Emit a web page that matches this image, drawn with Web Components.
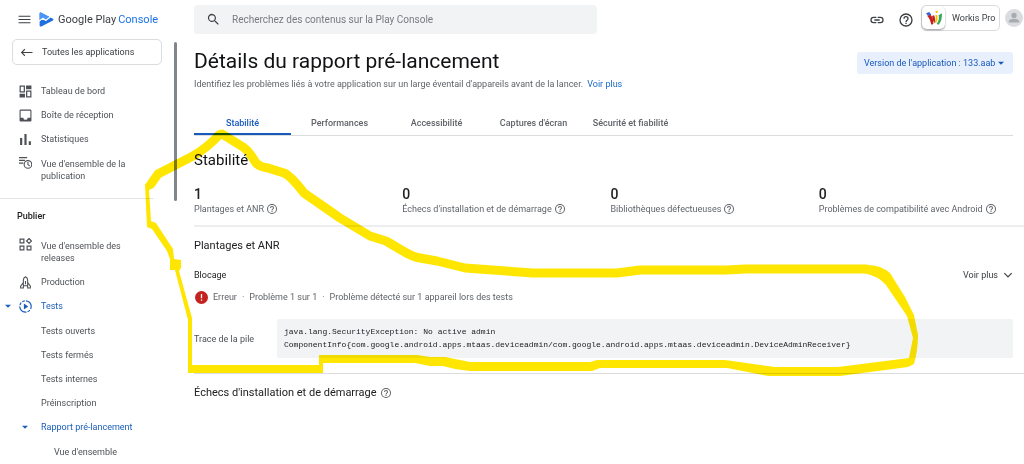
<!DOCTYPE html>
<html lang="fr">
<head>
<meta charset="utf-8">
<meta name="viewport" content="width=device-width, initial-scale=1">
<title>Détails du rapport pré-lancement</title>
<style>
body{margin:0;background:#fff;color:#3c4043;font:9px/12px Roboto,"Liberation Sans",sans-serif}
</style>
</head>
<body>
<play-console></play-console>

<script>
const define = (name, html, setup) => {
  const template = document.createElement('template');
  template.innerHTML = html;
  customElements.define(name, class extends HTMLElement {
    constructor() {
      super();
      this.attachShadow({mode: 'open'}).append(template.content.cloneNode(true));
    }
    connectedCallback() { if (setup) setup(this, this.shadowRoot); }
  });
};

const icons = {
  menu: '<path d="M1 19h22v-2H1v2zm0-6h22v-2H1v2zm0-8v2h22V5H1z"/>',
  back: '<path d="M23 11H5.400l4.300-4.300L8.300 5.300 1.600 12l6.700 6.700 1.400-1.400L5.400 13H23z"/>',
  dashboard: '<path d="M1 1h10v13H1zM3.300 3.300v8.400h5.400V3.300zM13 1h10v7H13zM13 10h10v13H13zM15.300 12.300v8.400h5.400v-8.400zM1 16h10v7H1z" fill-rule="evenodd"/>',
  inbox: '<path fill-rule="evenodd" d="M3 1h18a2 2 0 0 1 2 2v18a2 2 0 0 1-2 2H3a2 2 0 0 1-2-2V3a2 2 0 0 1 2-2zm0 2v13h5a4 4 0 0 0 8 0h5V3z"/>',
  bars: '<path d="M2 9h4v13H2zM10 2h4v20h-4zM18 15h4v7h-4z"/>',
  schedule: '<path d="M0 2h15v2.200H0zM0 7h11v2.200H0zM0 12h8v2.200H0z"/><circle cx="16.500" cy="15.500" r="7" fill="none" stroke="currentColor" stroke-width="2"/><path d="M15.500 11h2v4.500l3 2-1 1.600-4-2.600z"/>',
  widgets: '<g fill="none" stroke="currentColor" stroke-width="2.200"><path d="M2 2h7v7H2zM2 15h7v7H2zM15 15h7v7h-7zM18.500 1l4.500 4.500-4.500 4.500L14 5.500z"/></g>',
  production: '<g fill="none" stroke="currentColor" stroke-width="2"><path d="M8 21V8c0-3 2-5.500 4-6.500 2 1 4 3.500 4 6.500v13M8 12l-5 7v3h5v-4h8v4h5v-3l-5-7M12 9v6"/></g>',
  tests: '<circle cx="12" cy="12" r="10.500" fill="none" stroke="currentColor" stroke-width="2.200" stroke-dasharray="5 2.200 5 2.200 12 0 6 2.200"/><path d="M9 6.500v11l8-5.500z"/>',
  caret: '<path d="M3 8h18l-9 9z"/>',
  search: '<path d="M15.500 14h-.8l-.3-.3A6.500 6.500 0 1 0 13.700 14.400l.3.3v.8l5 5 1.500-1.500zm-6 0a4.500 4.500 0 1 1 0-9 4.500 4.500 0 0 1 0 9z"/>',
  link: '<path d="M3.900 12A3.100 3.100 0 0 1 7 8.900h4V7H7a5 5 0 0 0 0 10h4v-1.900H7A3.100 3.100 0 0 1 3.900 12zM8 13h8v-2H8zm9-6h-4v1.900h4a3.100 3.100 0 0 1 0 6.200h-4V17h4a5 5 0 0 0 0-10z"/>',
  help: '<path d="M11 18h2v-2h-2zm1-16a10 10 0 1 0 0 20 10 10 0 0 0 0-20zm0 18a8 8 0 1 1 0-16 8 8 0 0 1 0 16zm0-14a4 4 0 0 0-4 4h2a2 2 0 1 1 4 0c0 2-3 1.750-3 5h2c0-2.250 3-2.500 3-5a4 4 0 0 0-4-4z"/>',
  error: '<circle cx="12" cy="12" r="12"/><path fill="#fff" d="M10.800 5.500h2.400v8h-2.400zM10.800 15.500h2.400V18h-2.400z"/>',
  chevron: '<path d="M6.400 8.100 12 13.700l5.600-5.600L19 9.500l-7 7-7-7z"/>',
  logo: '<path fill="#1f6fe0" d="M1 2.500C1 .8 2.200.2 3.600 1L22.300 10.600c1.200.7 1.200 2.100 0 2.800L3.600 23C2.200 23.800 1 23.200 1 21.500z"/><path fill="#4a97f7" d="M1 2.500C1 .8 2.200.2 3.600 1L17 8l-6 5-4-3-6 4z"/><path fill="none" stroke="#fff" stroke-width="1.900" stroke-linejoin="round" d="M0 14.500 6.500 10l4.200 3.500L18 8"/>',
  workis: '<path fill="#3367d6" d="M0 5l5-2 3 4-5 2z"/><path fill="#c5221f" d="M2 9l5-2c3 4 4 8 4 14l-3 1C7 17 5 12 2 9zM9 9l3-1c2 3 2 7 1 12l-2-3z"/><path fill="#fbbc04" d="M14 7l3 1c1 5 0 9-2 12l-2-2c2-4 2-7 1-11zM14 2l4-1-1 3-2 1z"/><path fill="#34a853" d="M19 8l5-3c0 7-1 13-5 17l-3-1c3-4 4-8 3-13z"/>',
  person: '<circle cx="12" cy="12" r="12" fill="#dadce0"/><g fill="#a8abaf"><circle cx="12" cy="8.500" r="3.500"/><path d="M5 17c0-3 4-4 7-4s7 1 7 4v1H5z"/></g>'
};

define('ui-icon', `<style>
:host{display:block;flex:none;width:var(--size,12px);height:var(--size,12px)}
svg{display:block;width:100%;height:100%;fill:currentColor}
</style><svg viewBox="0 0 24 24" aria-hidden="true"></svg>`,
(host, root) => { root.querySelector('svg').innerHTML = icons[host.getAttribute('name')]; });

define('nav-item', `<style>
:host{display:block}
a{display:flex;align-items:center;box-sizing:border-box;min-height:24px;padding:5px 36px 5px 4px;color:#4d5156;text-decoration:none}
:host([tall]) a{min-height:37px}
:host([tall]) .icon{align-self:flex-start}
:host([active]) a{color:#1a5dba}
.lead{flex:none;width:8px;--size:8px;margin-right:6px}
.icon{flex:none;width:14px;margin-right:9px;display:flex;justify-content:center;--size:13px}
:host([level="3"]) a{padding-left:17px}
</style><a href="#"><span class="lead"></span><span class="icon"></span><slot></slot></a>`,
(host, root) => {
  const icon = host.getAttribute('icon');
  if (icon) root.querySelector('.icon').innerHTML = '<ui-icon name="' + icon + '"' + (icon === 'caret' ? ' style="--size:8px"' : '') + '></ui-icon>';
  if (host.hasAttribute('expanded')) root.querySelector('.lead').innerHTML = '<ui-icon name="caret"></ui-icon>';
});

define('side-nav', `<style>
:host{display:flex;justify-content:space-between}
nav{flex:1;min-width:0}
.all{display:flex;align-items:center;width:150px;height:26px;margin:0 0 14px 12px;padding:0 7px;gap:9px;border:1px solid #dadce0;border-radius:5px;background:#fff;color:#3c4043;font:inherit;box-sizing:border-box}
.all ui-icon{color:#3c4043;--size:13px}
hr{border:0;border-top:1px solid #e3e5e8;margin:10px 20px 11px 0}
h2{margin:0 0 11px 17px;font-size:9px;line-height:12px;font-weight:500;color:#202124}
.sub{padding-top:1px}
.thumb{width:3px;height:159px;margin:3px 3px 0 0;border-radius:2px;background:#80868b}
</style>
<nav aria-label="Menu principal">
<button class="all"><ui-icon name="back"></ui-icon>Toutes les applications</button>
<nav-item icon="dashboard">Tableau de bord</nav-item>
<nav-item icon="inbox">Boîte de réception</nav-item>
<nav-item icon="bars">Statistiques</nav-item>
<nav-item icon="schedule" tall>Vue d'ensemble de la publication</nav-item>
<hr>
<h2>Publier</h2>
<nav-item icon="widgets" tall>Vue d'ensemble des releases</nav-item>
<nav-item icon="production">Production</nav-item>
<nav-item icon="tests" active expanded>Tests</nav-item>
<div class="sub">
<nav-item>Tests ouverts</nav-item>
<nav-item>Tests fermés</nav-item>
<nav-item>Tests internes</nav-item>
<nav-item>Préinscription</nav-item>
<nav-item icon="caret" active>Rapport pré-lancement</nav-item>
<div class="sub"><nav-item level="3">Vue d'ensemble</nav-item></div>
</div>
</nav>
<div class="thumb"></div>`);

define('top-bar', `<style>
:host{display:grid;grid-template-columns:194px minmax(0,1fr) auto;align-items:center;height:39px}
.brand{display:flex;align-items:center;padding-left:18px}
button{font:inherit;color:#3c4043;background:none;border:0;padding:0}
.brand ui-icon{--size:13px}
.brand a{display:flex;align-items:center;gap:4px;margin-left:8px;color:#3c4043;text-decoration:none;font-size:11px}
.brand a ui-icon{--size:15px}
.brand span{display:flex;gap:2px}
.brand em{font-style:normal;color:#1a73e8}
.search{display:flex;align-items:center;gap:11px;box-sizing:border-box;width:100%;max-width:403px;height:29px;padding:0 12px;border-radius:4px;background:#f1f3f4}
.search ui-icon{--size:15px}
input{flex:1;min-width:0;border:0;padding:0;background:none;font:10px/14px Roboto,"Liberation Sans",sans-serif;color:#3c4043;outline:0}
input::placeholder{color:#777b80;opacity:1}
.tools{display:flex;align-items:center}
.tools ui-icon{--size:16px}
.tools .link{margin-right:13px}
.tools .help{margin-right:7px}
.app{display:flex;align-items:center;width:79px;height:26px;box-sizing:border-box;gap:7px;border:1px solid #dadce0;border-radius:5px;margin:0 5px 4px 0}
.tile{display:flex;align-items:center;justify-content:center;width:23px;height:23px;border-radius:5px;box-shadow:0 1px 2px #0006}
.app,.user{white-space:nowrap}
.user{margin:0 1px 4px 0}
.user ui-icon{--size:18px}
</style>
<div class="brand"><button aria-label="Menu"><ui-icon name="menu"></ui-icon></button><a href="#"><ui-icon name="logo"></ui-icon><span>Google Play <em>Console</em></span></a></div>
<label class="search"><ui-icon name="search"></ui-icon><input type="search" aria-label="Rechercher" placeholder="Recherchez des contenus sur la Play Console"></label>
<div class="tools">
<button class="link" aria-label="Lien"><ui-icon name="link"></ui-icon></button>
<button class="help" aria-label="Aide"><ui-icon name="help"></ui-icon></button>
<button class="app"><span class="tile"><ui-icon name="workis"></ui-icon></span>Workis Pro</button>
<button class="user" aria-label="Compte"><ui-icon name="person"></ui-icon></button>
</div>`);

define('report-header', `<style>
:host{display:flex;justify-content:space-between;align-items:flex-start}
h1{margin:0;font-size:21px;line-height:28px;font-weight:400;color:#111214}
p{margin:3px 0 0;color:#5f6368}
a{color:#1a67c9;text-decoration:none;margin-left:2px}
.version{display:grid;align-items:center;margin-top:5px;color:#185abc}
select,ui-icon{grid-area:1/1}
select{appearance:none;width:156px;height:22px;margin:0;padding:0 10px 0 7px;border:0;border-radius:3px;background:#e8f0fe;color:#185abc;font:400 9px/12px Roboto,"Liberation Sans",sans-serif}
ui-icon{--size:8px;justify-self:end;margin-right:8px;pointer-events:none}
</style>
<div><h1>Détails du rapport pré-lancement</h1>
<p>Identifiez les problèmes liés à votre application sur un large éventail d'appareils avant de la lancer. <a href="#">Voir plus</a></p></div>
<div class="version"><select aria-label="Version de l'application"><option>Version de l'application : 133.aab</option></select><ui-icon name="caret"></ui-icon></div>`);

define('tab-bar', `<style>
:host{display:flex;border-bottom:1px solid #dadce0}
button{width:97px;height:24px;padding:2px 0 0;border:0;border-bottom:2px solid transparent;background:none;font:500 9px/12px Roboto,"Liberation Sans",sans-serif;color:#5f6368;white-space:nowrap}
button[aria-selected=true]{color:#185abc;border-color:#185abc}
</style>
<button role="tab" aria-selected="true">Stabilité</button><button role="tab">Performances</button><button role="tab">Accessibilité</button><button role="tab">Captures d'écran</button><button role="tab">Sécurité et fiabilité</button>`,
host => host.setAttribute('role', 'tablist'));

define('metric-card', `<style>
:host{display:block;min-width:0}
b{display:block;font-size:14px;line-height:16px;font-weight:500;color:#202124}
span{display:flex;align-items:center;gap:2px;white-space:nowrap;color:#5f6368;line-height:14px}
ui-icon{--size:12px}
</style><b></b><span><slot></slot><ui-icon name="help"></ui-icon></span>`,
(host, root) => { root.querySelector('b').textContent = host.getAttribute('value'); });

define('stability-report', `<style>
:host{display:block}
h2{margin:0;font-size:15px;line-height:20px;font-weight:400;color:#111214}
h3{display:flex;align-items:center;gap:3px;margin:0;font-size:11px;line-height:16px;font-weight:400;color:#202124}
h3 ui-icon{--size:12px;color:#5f6368}
.metrics{display:grid;grid-template-columns:repeat(4,minmax(0,1fr));gap:14px;margin:16px 11px 9px 0}
hr{margin:0;border:0;border-top:2px solid #eceef0}
hr.thin{border-top:1px solid #dadce0}
.crash{margin:11px 11px 15px 0}
.row{display:flex;align-items:center;justify-content:space-between;margin-top:13px;height:16px;color:#202124}
button{display:flex;align-items:center;gap:3px;padding:0;border:0;background:none;font:inherit;color:#3c4043}
button ui-icon{--size:14px;margin-right:-2px}
.facts{display:flex;align-items:center;gap:5px;margin-top:7px;height:14px;color:#5f6368}
.facts ui-icon{color:#c5221f;--size:13px;margin-left:1px}
.trace{display:grid;grid-template-columns:83px minmax(0,1fr);align-items:center;margin-top:15px;color:#4d5156}
pre{margin:0;padding:6px 7px 7px;border-radius:2px;background:#f1f3f4;color:#202124;font:8px/13px "Liberation Mono",monospace;white-space:pre-wrap}
.next{margin-top:11px}
</style>
<h2>Stabilité</h2>
<div class="metrics">
<metric-card value="1">Plantages et ANR</metric-card>
<metric-card value="0">Échecs d'installation et de démarrage</metric-card>
<metric-card value="0">Bibliothèques défectueuses</metric-card>
<metric-card value="0">Problèmes de compatibilité avec Android</metric-card>
</div>
<hr>
<section class="crash">
<h3>Plantages et ANR</h3>
<div class="row"><span>Blocage</span><button>Voir plus<ui-icon name="chevron"></ui-icon></button></div>
<div class="facts"><ui-icon name="error"></ui-icon><span>Erreur</span><span>·</span><span>Problème 1 sur 1</span><span>·</span><span>Problème détecté sur 1 appareil lors des tests</span></div>
<div class="trace"><span>Trace de la pile</span><pre>java.lang.SecurityException: No active admin
ComponentInfo{com.google.android.apps.mtaas.deviceadmin/com.google.android.apps.mtaas.deviceadmin.DeviceAdminReceiver}</pre></div>
</section>
<hr class="thin">
<h3 class="next">Échecs d'installation et de démarrage<ui-icon name="help"></ui-icon></h3>`);

/* Freehand highlighter drawn over the page. */
define('marker-stroke', `<style>
:host{position:absolute;top:0;left:0;mix-blend-mode:multiply;pointer-events:none}
svg{display:block;fill:none;stroke:#ffe600;stroke-linejoin:round;stroke-linecap:round}
</style>
<svg width="1024" height="464" viewBox="0 0 1024 464" aria-hidden="true">
<path stroke-width="9" d="M151 184 L158 174 L193 156 Q207 148 219 135 L222 134 L243 147 Q249 151 256 163 Q260 167 268 168 L284 173 Q291 176 304 193 L340 218 L370 236 L386 241 L403 251 Q413 257 420 258 L437 261 L465 268 L533 273 H617 L640 270 H727 L745 269 H866"/>
<path fill="#ffe600" stroke="none" d="M145 184 L155 178 L153 188 L149 190 L151 221 L156 223 L173 249 L174 259 L181 260 V268 L179 271 L192 318 V365 H319 V355 H417 L430 357 H445 L470 362 H590 L597 360 H725 L775 367 H838 L909 358 L913 338 L907 316 L886 285 Q878 276 864 273 V265 Q880 264 890 273 L905 297 L914 315 L918 335 Q918 350 914 364 L908 367 L840 376 H768 L727 368 H600 L592 371 H470 L455 369 L443 366 H430 L415 363 H323 V373 H188 V320 L175 270 H170 V259 L167 251 L152 229 L147 227 Z"/>
</svg>`);

define('play-console', `<style>
:host{display:block;position:relative;overflow:hidden;isolation:isolate;background:#fff}
.body{display:grid;grid-template-columns:180px minmax(0,1fr);column-gap:14px}
report-header,tab-bar{margin-right:11px}
main{padding-top:8px;min-width:0}
tab-bar{margin-top:21px}
stability-report{margin-top:14px}
</style>
<top-bar></top-bar>
<div class="body"><side-nav></side-nav>
<main><report-header></report-header><tab-bar></tab-bar><stability-report></stability-report></main></div>
<marker-stroke></marker-stroke>`);
</script>
</body>
</html>
